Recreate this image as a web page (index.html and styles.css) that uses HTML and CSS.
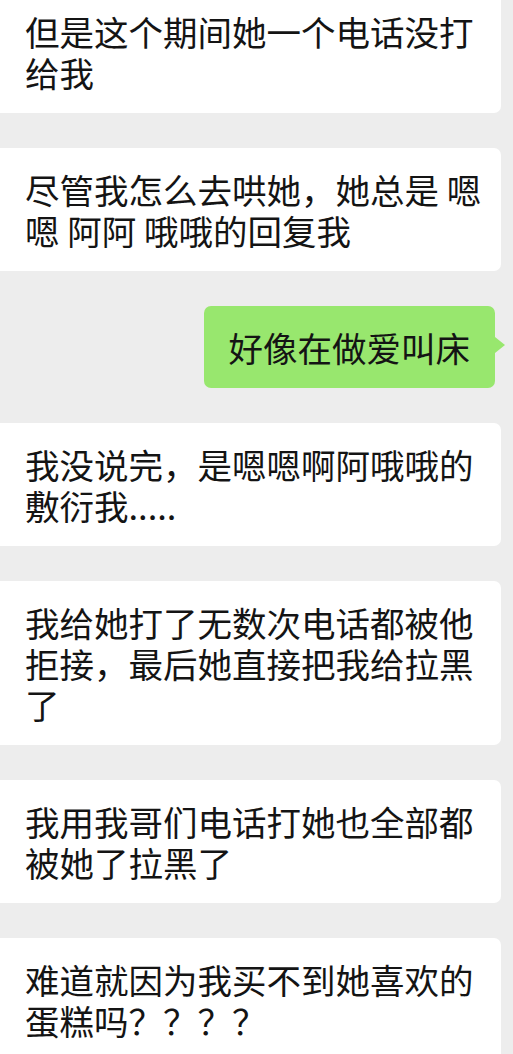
FILE: index.html
```html
<!DOCTYPE html>
<html lang="zh-CN">
<head>
<meta charset="utf-8">
<title>聊天记录</title>
<link rel="stylesheet" href="styles.css">
</head>
<body>
<main class="chat">
  <div class="row row-in first"><div class="bubble bubble-in">但是这个期间她一个电话没打给我</div></div>
  <div class="row row-in"><div class="bubble bubble-in">尽管我怎么去哄她，她总是 嗯嗯 阿阿 哦哦的回复我</div></div>
  <div class="row row-out"><div class="bubble bubble-out">好像在做爱叫床</div></div>
  <div class="row row-in"><div class="bubble bubble-in">我没说完，是嗯嗯啊阿哦哦的敷衍我.....</div></div>
  <div class="row row-in"><div class="bubble bubble-in">我给她打了无数次电话都被他拒接，最后她直接把我给拉黑了</div></div>
  <div class="row row-in"><div class="bubble bubble-in">我用我哥们电话打她也全部都被她了拉黑了</div></div>
  <div class="row row-in"><div class="bubble bubble-in">难道就因为我买不到她喜欢的蛋糕吗？？？？</div></div>
</main>
</body>
</html>
```
FILE: styles.css
```css
html, body {
  margin: 0;
  padding: 0;
  background: #ededed;
}
body {
  width: 513px;
  height: 1054px;
  overflow: hidden;
  font-family: "Noto Sans CJK SC", "Noto Sans", sans-serif;
  color: #141414;
}
.chat {
  display: flex;
  flex-direction: column;
  gap: 35px;
}
.row {
  display: flex;
}
.row.first {
  margin-top: -10px;
}
.row-in {
  justify-content: flex-start;
}
.row-out {
  justify-content: flex-end;
  padding-right: 18px;
}
.bubble {
  font-size: 34.5px;
  line-height: 41px;
  padding: 20.5px 25px;
  word-break: break-all;
  position: relative;
}
.bubble-in {
  background: #ffffff;
  width: 462px;
  padding-right: 14px;
  border-radius: 0 7px 7px 0;
}
.bubble-out {
  background: #98e76e;
  border-radius: 7px;
}
.bubble-out::after {
  content: "";
  position: absolute;
  right: -10px;
  top: 31px;
  border-style: solid;
  border-width: 8px 0 8px 10px;
  border-color: transparent transparent transparent #98e76e;
}
```
